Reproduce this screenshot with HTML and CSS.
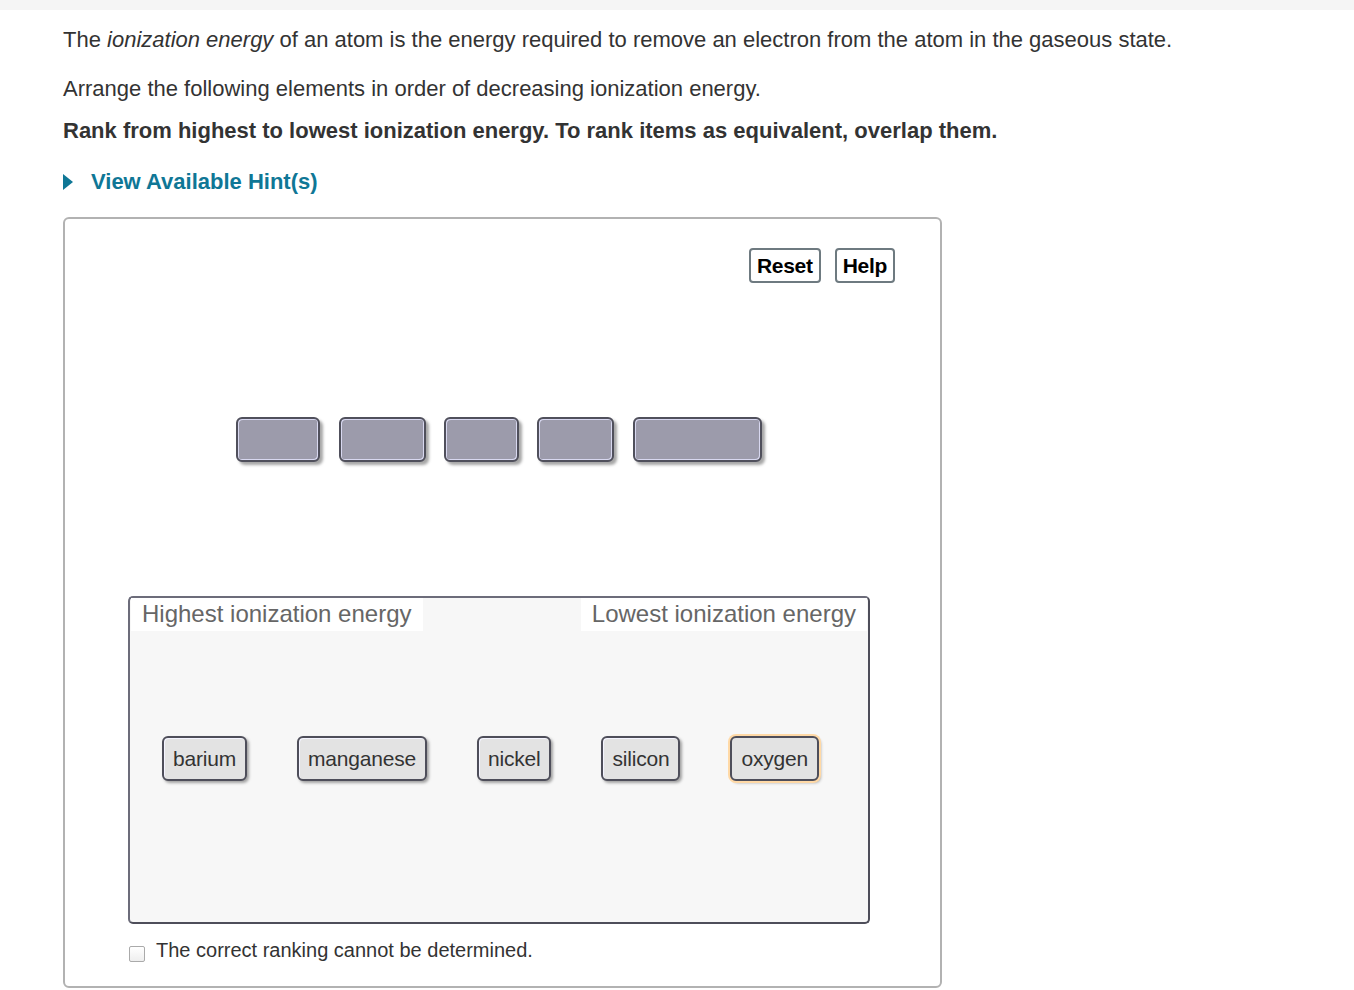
FILE: index.html
```html
<!DOCTYPE html>
<html lang="en">
<head>
    <meta charset="UTF-8">
    <title>Ionization Energy Ranking</title>
    <link rel="stylesheet" href="styles.css">
</head>
<body>
    <div class="topbar"></div>

    <div class="content">
        <p class="intro">The <i>ionization energy</i> of an atom is the energy required to remove an electron from the atom in the gaseous state.</p>
        <p class="ask">Arrange the following elements in order of decreasing ionization energy.</p>
        <p class="rank-note">Rank from highest to lowest ionization energy. To rank items as equivalent, overlap them.</p>

        <div class="hint"><span class="arrow"></span>View Available Hint(s)</div>

        <div class="panel">
            <div class="tools">
                <button class="tool-btn">Reset</button>
                <button class="tool-btn">Help</button>
            </div>

            <div class="slots">
                <div class="slot w1"></div>
                <div class="slot w2"></div>
                <div class="slot w3"></div>
                <div class="slot w4"></div>
                <div class="slot w5"></div>
            </div>

            <div class="ranking">
                <div class="labels">
                    <span class="lbl">Highest ionization energy</span>
                    <span class="lbl">Lowest ionization energy</span>
                </div>
                <div class="chips">
                    <div class="chip">barium</div>
                    <div class="chip">manganese</div>
                    <div class="chip">nickel</div>
                    <div class="chip">silicon</div>
                    <div class="chip picked">oxygen</div>
                </div>
            </div>

            <label class="cant"><span class="box"></span>The correct ranking cannot be determined.</label>
        </div>
    </div>
</body>
</html>
```

FILE: styles.css
```css
body{
    margin: 0;
    background-color: #fff;
    color: #333;
    font-family: "Liberation Sans", Arial, sans-serif;
    font-size: 22px;
}
.topbar{
    height: 10px;
    background-color: #f5f5f5;
}
.content{
    padding-left: 63px;
}
.content p{
    margin: 0;
    line-height: 24px;
}
.intro{
    padding-top: 18px;
}
.ask{
    margin-top: 25px !important;
}
.rank-note{
    margin-top: 18px !important;
    font-weight: 700;
}
.hint{
    margin-top: 27px;
    height: 24px;
    line-height: 24px;
    display: flex;
    align-items: center;
    color: #0f7796;
    font-weight: 700;
    font-size: 22px;
}
.arrow{
    width: 0;
    height: 0;
    border-top: 8px solid transparent;
    border-bottom: 8px solid transparent;
    border-left: 10px solid #0f7796;
    margin-right: 18px;
}

.panel{
    margin-top: 23px;
    width: 875px;
    height: 767px;
    border: 2px solid #b2b2b2;
    border-radius: 6px;
}
.tools{
    display: flex;
    justify-content: flex-end;
    gap: 14px;
    margin-top: 29px;
    margin-right: 45px;
}
.tool-btn{
    height: 35px;
    padding: 0 6px;
    background: #fff;
    border: 2px solid #6e7a80;
    border-radius: 4px;
    font-family: "Liberation Sans", Arial, sans-serif;
    font-weight: 700;
    font-size: 21px;
    letter-spacing: -0.3px;
    color: #000;
}

.slots{
    display: flex;
    gap: 19px;
    margin-top: 134px;
    margin-left: 171px;
}
.slot{
    height: 45px;
    box-sizing: border-box;
    background-color: #9c9bab;
    border: 2px solid #50505c;
    border-radius: 6px;
    box-shadow: inset 1px 1px 0 #d8d8f0, inset -1px -1px 0 #d8d8f0, 3px 3px 3px rgba(0,0,0,.35);
}
.w1{ width: 84px; }
.w2{ width: 87px; }
.w3{ width: 75px; margin-left: -1px; }
.w4{ width: 77px; margin-left: -1px; }
.w5{ width: 129px; }

.ranking{
    margin-top: 134px;
    margin-left: 63px;
    width: 742px;
    height: 328px;
    box-sizing: border-box;
    background-color: #f7f7f7;
    border: 2px solid #4e4e5a;
    border-top-color: #6c6c7a;
    border-left-color: #6c6c7a;
    border-radius: 5px;
}
.labels{
    display: flex;
    justify-content: space-between;
    padding: 0 1px;
}
.lbl{
    background-color: #fff;
    color: #666;
    font-size: 24px;
    height: 33px;
    line-height: 31px;
    padding: 0 11px;
}
.chips{
    display: flex;
    gap: 50px;
    margin-top: 105px;
    padding-left: 32px;
}
.chip{
    height: 45px;
    box-sizing: border-box;
    padding: 0 9px;
    line-height: 41px;
    background-color: #e3e3e3;
    border: 2px solid #4e4e5a;
    border-radius: 6px;
    box-shadow: inset 1px 1px 0 #f4f4ff, 2px 2px 3px rgba(0,0,0,.35);
    color: #333;
    font-size: 21px;
    letter-spacing: -0.2px;
}
.picked{
    box-shadow: 0 0 0 2px #ffd9a6, 2px 2px 3px rgba(0,0,0,.3);
}

.cant{
    display: flex;
    align-items: center;
    margin-top: 15px;
    margin-left: 64px;
    color: #333;
    font-size: 20px;
}
.box{
    width: 14px;
    height: 14px;
    border: 1px solid #aaa;
    border-radius: 2px;
    background: linear-gradient(#fff, #eee);
    margin-right: 11px;
    margin-top: 6px;
}
```
